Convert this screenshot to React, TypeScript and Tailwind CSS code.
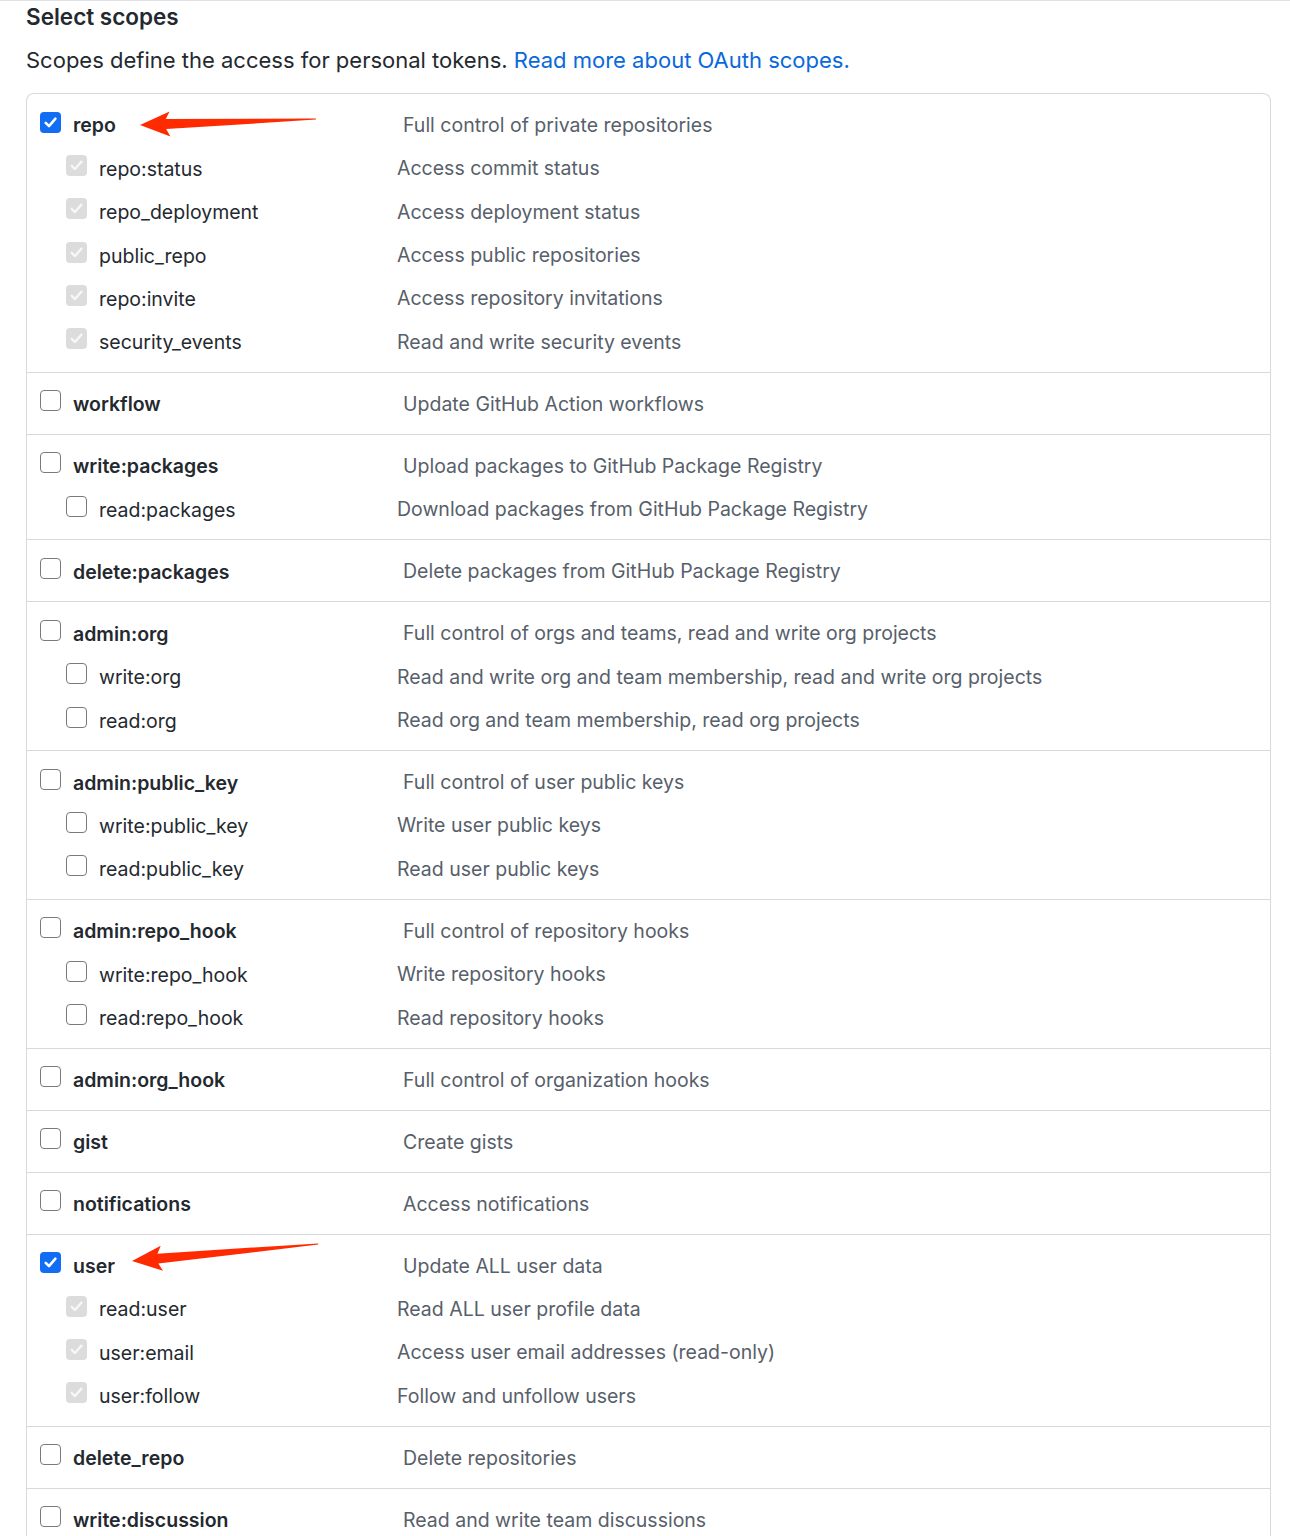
import React from "react";

type Item = { name: string; desc: string; checked?: boolean };
type Group = { main: Item; children?: Item[] };

const groups: Group[] = [
  {
    main: { name: "repo", desc: "Full control of private repositories", checked: true },
    children: [
      { name: "repo:status", desc: "Access commit status", checked: true },
      { name: "repo_deployment", desc: "Access deployment status", checked: true },
      { name: "public_repo", desc: "Access public repositories", checked: true },
      { name: "repo:invite", desc: "Access repository invitations", checked: true },
      { name: "security_events", desc: "Read and write security events", checked: true },
    ],
  },
  { main: { name: "workflow", desc: "Update GitHub Action workflows" } },
  {
    main: { name: "write:packages", desc: "Upload packages to GitHub Package Registry" },
    children: [{ name: "read:packages", desc: "Download packages from GitHub Package Registry" }],
  },
  { main: { name: "delete:packages", desc: "Delete packages from GitHub Package Registry" } },
  {
    main: { name: "admin:org", desc: "Full control of orgs and teams, read and write org projects" },
    children: [
      { name: "write:org", desc: "Read and write org and team membership, read and write org projects" },
      { name: "read:org", desc: "Read org and team membership, read org projects" },
    ],
  },
  {
    main: { name: "admin:public_key", desc: "Full control of user public keys" },
    children: [
      { name: "write:public_key", desc: "Write user public keys" },
      { name: "read:public_key", desc: "Read user public keys" },
    ],
  },
  {
    main: { name: "admin:repo_hook", desc: "Full control of repository hooks" },
    children: [
      { name: "write:repo_hook", desc: "Write repository hooks" },
      { name: "read:repo_hook", desc: "Read repository hooks" },
    ],
  },
  { main: { name: "admin:org_hook", desc: "Full control of organization hooks" } },
  { main: { name: "gist", desc: "Create gists" } },
  { main: { name: "notifications", desc: "Access notifications" } },
  {
    main: { name: "user", desc: "Update ALL user data", checked: true },
    children: [
      { name: "read:user", desc: "Read ALL user profile data", checked: true },
      { name: "user:email", desc: "Access user email addresses (read-only)", checked: true },
      { name: "user:follow", desc: "Follow and unfollow users", checked: true },
    ],
  },
  { main: { name: "delete_repo", desc: "Delete repositories" } },
  { main: { name: "write:discussion", desc: "Read and write team discussions" } },
];

function Check({ state }: { state: "on" | "off" | "disabled" }) {
  if (state === "on") {
    return (
      <span className="-mt-[5px] flex h-[21px] w-[21px] shrink-0 items-center justify-center rounded-[4px] bg-[#116df4]">
        <svg width="15" height="15" viewBox="0 0 14 14">
          <path d="M2.5 7.3 L5.6 10.3 L11.6 3.4" fill="none" stroke="#fff" strokeWidth="2.4" strokeLinecap="round" strokeLinejoin="round" />
        </svg>
      </span>
    );
  }
  if (state === "disabled") {
    return (
      <span className="-mt-[5px] flex h-[21px] w-[21px] shrink-0 items-center justify-center rounded-[4px] bg-[#dcdcdc]">
        <svg width="15" height="15" viewBox="0 0 14 14">
          <path d="M2.5 7.3 L5.6 10.3 L11.6 3.4" fill="none" stroke="#f7f7f7" strokeWidth="2.2" strokeLinecap="round" strokeLinejoin="round" />
        </svg>
      </span>
    );
  }
  return <span className="-mt-[5px] h-[21px] w-[21px] shrink-0 rounded-[4px] border border-[#7a7a7a] bg-white" />;
}

export default function App() {
  return (
    <div
      className="relative min-h-[1536px] w-[1290px] overflow-hidden bg-white text-[#24292f]"
      style={{ fontFamily: "Inter, 'Noto Sans', 'Liberation Sans', sans-serif" }}
    >
      <div className="border-t border-[#dfe1e4] pt-[1px]">
        <div className="pl-[26px] pr-[19px]">
          <h3 className="h-[30px] text-[22.5px] font-semibold leading-[30px]">Select scopes</h3>
          <p className="mt-[13px] text-[22px] leading-[30px] text-[#24292f]">
            Scopes define the access for personal tokens.{" "}
            <span className="text-[#0969da]">Read more about OAuth scopes.</span>
          </p>
          <div className="mt-[18px] rounded-t-[8px] border-x border-t border-[#d6dae0]">
            {groups.map((g, gi) => (
              <div key={g.main.name} className={`py-[15px] ${gi > 0 ? "border-t border-[#d6dae0]" : ""}`}>
                <div className="flex h-[31px] items-center pl-[13px]">
                  <div className="flex w-[363px] shrink-0 items-center gap-[12px]">
                    <Check state={g.main.checked ? "on" : "off"} />
                    <span className="pt-[3px] text-[19.5px] font-semibold">{g.main.name}</span>
                  </div>
                  <span className="pt-[2px] text-[19.5px] text-[#57606a]">{g.main.desc}</span>
                </div>
                {g.children?.map((c) => (
                  <div key={c.name} className="mt-[12.4px] flex h-[31px] items-center pl-[39px]">
                    <div className="flex w-[331px] shrink-0 items-center gap-[12px]">
                      <Check state={c.checked ? "disabled" : "off"} />
                      <span className="pt-[3px] text-[19.5px]">{c.name}</span>
                    </div>
                    <span className="pt-[2px] text-[19.5px] text-[#57606a]">{c.desc}</span>
                  </div>
                ))}
              </div>
            ))}
          </div>
        </div>
      </div>
      <svg className="pointer-events-none absolute left-0 top-0" width="1290" height="1536">
        <g transform="translate(140 125) rotate(-1.96)">
          <polygon points="0,0 30,-12.5 26,-5 176,-0.6 176,0.6 26,5 30,12.5" fill="#ff2a00" />
        </g>
        <g transform="translate(132 1261) rotate(-5.22)">
          <polygon points="0,0 30,-12.5 26,-5 187,-0.6 187,0.6 26,5 30,12.5" fill="#ff2a00" />
        </g>
      </svg>
    </div>
  );
}
